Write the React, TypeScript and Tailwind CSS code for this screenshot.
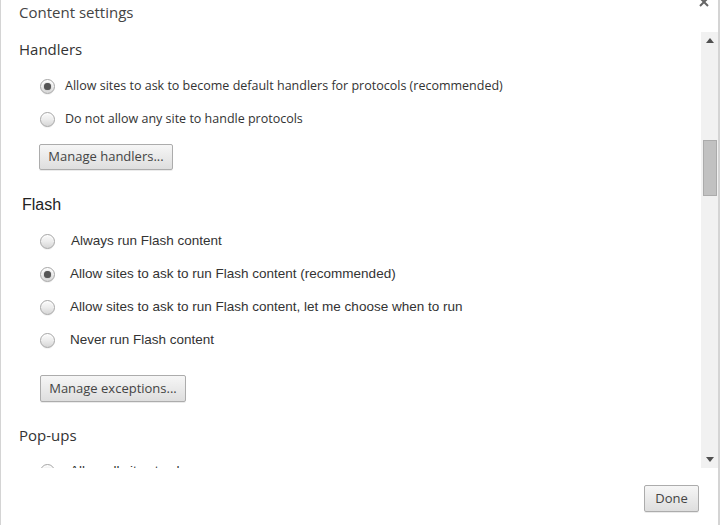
import React from "react";

const SEGOE = { fontFamily: '"Open Sans", "Noto Sans", sans-serif' };
const ARIAL = { fontFamily: '"Liberation Sans", Arial, sans-serif' };

function Radio({ checked }: { checked?: boolean }) {
  return (
    <span className="flex h-[15px] w-[15px] shrink-0 items-center justify-center rounded-full border border-[#a6a6a6] bg-gradient-to-b from-[#fbfbfb] via-[#ececec] to-[#d6d6d6] shadow-[inset_0_1px_1px_rgba(255,255,255,0.9),0_1px_0_rgba(0,0,0,0.05)]">
      {checked && <span className="h-[7px] w-[7px] rounded-full bg-[#555] shadow-[0_0_1px_rgba(0,0,0,0.5)]" />}
    </span>
  );
}

function Btn({ children, className = "" }: { children: React.ReactNode; className?: string }) {
  return (
    <button
      className={
        "flex items-center justify-center rounded-[2px] border border-[#acacac] bg-gradient-to-b from-[#f6f6f6] to-[#dedede] text-[13px] text-[#444] shadow-[0_1px_0_rgba(0,0,0,0.08)] " +
        className
      }
      style={SEGOE}
    >
      {children}
    </button>
  );
}

function Row({ checked, label, gap, font, size }: { checked?: boolean; label: string; gap: string; font: React.CSSProperties; size: string }) {
  return (
    <div className="flex h-[33px] items-center pl-[39px]">
      <Radio checked={checked} />
      <span className={"text-[#333] whitespace-nowrap " + size + " " + gap} style={font}>
        {label}
      </span>
    </div>
  );
}

export default function App() {
  return (
    <div className="flex h-[525px] w-[720px] flex-col overflow-hidden border-l border-r-2 border-[#d4d4d4] bg-white">
      {/* header */}
      <div className="flex h-[32px] shrink-0 items-start justify-between">
        <span className="ml-[18px] mt-[1px] text-[15px] text-[#444]" style={SEGOE}>
          Content settings
        </span>
        <svg className="mr-[9px] -mt-[3px]" width="10" height="10" viewBox="0 0 10 10">
          <path d="M1 1 L9 9 M9 1 L1 9" stroke="#666" strokeWidth="2" />
        </svg>
      </div>

      {/* scroll area */}
      <div className="flex h-[436px] shrink-0">
        <div className="flex-1 overflow-hidden">
          <div className="flex flex-col pt-[7px]">
            <div className="ml-[18px] h-[20px] text-[15px] leading-[20px] text-[#333]" style={SEGOE}>
              Handlers
            </div>
            <div className="mt-[11px]">
              <Row checked label="Allow sites to ask to become default handlers for protocols (recommended)" gap="ml-[10px]" font={SEGOE} size="text-[12.5px]" />
              <Row label="Do not allow any site to handle protocols" gap="ml-[10px]" font={SEGOE} size="text-[12.5px]" />
            </div>
            <div className="mt-[8px] pl-[38px]">
              <Btn className="h-[26px] w-[134px]">Manage handlers...</Btn>
            </div>
            <div className="ml-[21px] mt-[25px] h-[20px] text-[16px] leading-[20px] text-[#222]" style={ARIAL}>
              Flash
            </div>
            <div className="mt-[10px]">
              <Row label="Always run Flash content" gap="ml-[16px]" font={ARIAL} size="text-[13.5px]" />
              <Row checked label="Allow sites to ask to run Flash content (recommended)" gap="ml-[15px]" font={ARIAL} size="text-[13.5px]" />
              <Row label="Allow sites to ask to run Flash content, let me choose when to run" gap="ml-[15px]" font={ARIAL} size="text-[13.5px]" />
              <Row label="Never run Flash content" gap="ml-[15px]" font={ARIAL} size="text-[13.5px]" />
            </div>
            <div className="mt-[18px] pl-[39px]">
              <Btn className="h-[27px] w-[146px]">Manage exceptions...</Btn>
            </div>
            <div className="ml-[18px] mt-[23px] h-[20px] text-[15px] leading-[20px] text-[#333]" style={SEGOE}>
              Pop-ups
            </div>
            <div className="mt-[10px]">
              <Row label="Allow all sites to show pop-ups" gap="ml-[15px]" font={ARIAL} size="text-[13.5px]" />
            </div>
          </div>
        </div>
        {/* scrollbar */}
        <div className="flex w-[17px] shrink-0 flex-col items-center bg-[#f1f1f1]">
          <div className="flex h-[17px] w-full items-center justify-center">
            <svg width="8" height="5" viewBox="0 0 8 5">
              <path d="M4 0 L8 5 L0 5 Z" fill="#505050" />
            </svg>
          </div>
          <div className="mt-[91px] h-[56px] w-[14px] border border-[#ababab] bg-[#c1c1c1]" />
          <div className="flex-1" />
          <div className="flex h-[17px] w-full items-center justify-center">
            <svg width="8" height="5" viewBox="0 0 8 5">
              <path d="M0 0 L8 0 L4 5 Z" fill="#505050" />
            </svg>
          </div>
        </div>
      </div>

      {/* footer */}
      <div className="flex flex-1 items-start justify-end pr-[19px] pt-[17px]">
        <Btn className="h-[27px] w-[55px]">Done</Btn>
      </div>
    </div>
  );
}
